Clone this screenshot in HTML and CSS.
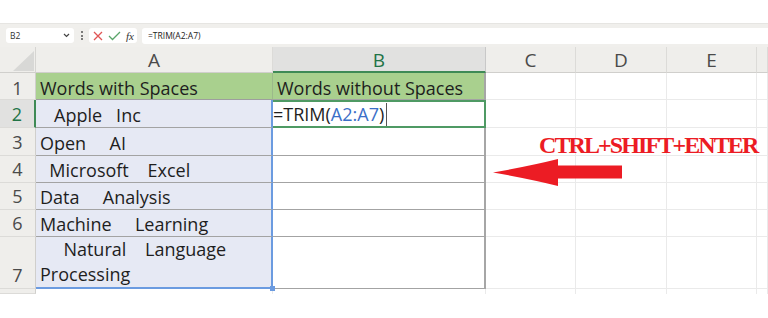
FILE: index.html
```html
<!DOCTYPE html>
<html lang="en">
<head>
    <meta charset="UTF-8">
    <meta name="viewport" content="width=device-width, initial-scale=1.0">
    <title>TRIM - Words without Spaces</title>
    <link rel="stylesheet" href="styles.css">
</head>
<body>
    <div class="top-gap"></div>

    <div class="formula-bar">
        <div class="name-box">
            <span>B2</span>
            <svg class="chevron" width="7" height="5" viewBox="0 0 7 5"><path d="M1 1 L3.5 3.5 L6 1" fill="none" stroke="#444" stroke-width="1.2"/></svg>
        </div>
        <div class="dots"><i></i><i></i><i></i></div>
        <div class="fx-box">
            <svg width="10" height="10" viewBox="0 0 10 10"><path d="M1 1 L9 9 M9 1 L1 9" stroke="#e05555" stroke-width="1.3"/></svg>
            <svg width="13" height="10" viewBox="0 0 13 10"><path d="M1 5 L4.5 8.5 L12 1" fill="none" stroke="#5aa56a" stroke-width="1.3"/></svg>
            <span class="fx">fx</span>
        </div>
        <div class="formula-input">=TRIM(A2:A7)</div>
    </div>

    <div class="sheet">
        <div class="grid">
            <!-- header row -->
            <div class="corner"></div>
            <div class="ch">A</div>
            <div class="ch active">B</div>
            <div class="ch">C</div>
            <div class="ch">D</div>
            <div class="ch">E</div>
            <div class="ch"></div>

            <!-- row 1 -->
            <div class="rh first">1</div>
            <div class="cell title">Words with Spaces</div>
            <div class="cell title col-b">Words without Spaces</div>
            <div class="cell"></div><div class="cell"></div><div class="cell"></div><div class="cell"></div>

            <!-- row 2 -->
            <div class="rh active">2</div>
            <div class="cell sel">   Apple   Inc</div>
            <div class="cell edit">=TRIM(<span class="ref">A2:A7</span>)<span class="caret"></span></div>
            <div class="cell"></div><div class="cell"></div><div class="cell"></div><div class="cell"></div>

            <!-- row 3 -->
            <div class="rh">3</div>
            <div class="cell sel">Open     AI</div>
            <div class="cell col-b"></div>
            <div class="cell"></div><div class="cell"></div><div class="cell"></div><div class="cell"></div>

            <!-- row 4 -->
            <div class="rh">4</div>
            <div class="cell sel">  Microsoft    Excel</div>
            <div class="cell col-b"></div>
            <div class="cell"></div><div class="cell"></div><div class="cell"></div><div class="cell"></div>

            <!-- row 5 -->
            <div class="rh">5</div>
            <div class="cell sel">Data     Analysis</div>
            <div class="cell col-b"></div>
            <div class="cell"></div><div class="cell"></div><div class="cell"></div><div class="cell"></div>

            <!-- row 6 -->
            <div class="rh">6</div>
            <div class="cell sel">Machine     Learning</div>
            <div class="cell col-b"></div>
            <div class="cell"></div><div class="cell"></div><div class="cell"></div><div class="cell"></div>

            <!-- row 7 -->
            <div class="rh">7</div>
            <div class="cell sel last">     Natural    Language Processing</div>
            <div class="cell col-b"></div>
            <div class="cell"></div><div class="cell"></div><div class="cell"></div><div class="cell"></div>

            <!-- row 8 (cut off) -->
            <div class="rh"></div>
            <div class="cell stub"></div><div class="cell stub"></div><div class="cell stub"></div>
            <div class="cell stub"></div><div class="cell stub"></div><div class="cell stub"></div>
        </div>

        <div class="note">CTRL+SHIFT+ENTER</div>
        <svg class="arrow" width="136" height="34" viewBox="0 0 136 34">
            <path d="M3 16.5 Q40 10 68 3 L68 9.5 L132 9.5 L132 22.5 L68 22.5 L68 30 Q40 23 3 16.5 Z" fill="#ec1c24"/>
        </svg>
    </div>
</body>
</html>
```

FILE: styles.css
```css
body {
    margin: 0;
    background: #fff;
    font-family: "Open Sans", Arial, sans-serif;
    color: #222;
    overflow: hidden;
}
.top-gap {
    height: 23px;
}

/* formula bar */
.formula-bar {
    height: 24px;
    background: #f0efec;
    display: flex;
    align-items: center;
    padding-left: 6px;
    box-sizing: border-box;
    border-top: 1px solid #e6e5e2;
}
.name-box {
    width: 68px;
    height: 15px;
    background: #fff;
    border-radius: 3px;
    display: flex;
    align-items: center;
    justify-content: space-between;
    padding: 0 4px;
    box-sizing: border-box;
    font-size: 8.5px;
    color: #333;
}
.dots {
    width: 15px;
    display: flex;
    flex-direction: column;
    align-items: center;
    gap: 1.5px;
}
.dots i {
    width: 2px;
    height: 2px;
    background: #555;
    border-radius: 50%;
}
.fx-box {
    width: 48px;
    height: 15px;
    background: #fff;
    border-radius: 3px;
    display: flex;
    align-items: center;
    justify-content: space-between;
    padding: 0 3px 0 4px;
    box-sizing: border-box;
}
.fx {
    font-family: "Liberation Serif", serif;
    font-style: italic;
    font-size: 11px;
    color: #333;
}
.formula-input {
    flex: 1;
    height: 16px;
    margin-left: 5px;
    background: #fff;
    border-radius: 3px 0 0 3px;
    font-size: 8.5px;
    line-height: 16px;
    padding-left: 6px;
    color: #222;
}

/* grid */
.sheet {
    position: relative;
    background: #fff;
}
.grid {
    display: grid;
    grid-template-columns: 36px 237px 213px 90px 91px 90px 11px;
    grid-template-rows: 26px 27px 28px 28px 27px 27px 27px 52px 5px;
}
.corner {
    background: #efeeeb;
    border-right: 1px solid #d6d5d2;
    border-bottom: 1px solid #d0cfcc;
    position: relative;
}
.corner::after {
    content: "";
    position: absolute;
    right: 1px;
    bottom: 1px;
    border-left: 21px solid transparent;
    border-bottom: 20px solid #d8d8d6;
}
.ch {
    background: #efeeeb;
    border-right: 1px solid #dcdbd8;
    border-bottom: 1px solid #d0cfcc;
    text-align: center;
    font-size: 19px;
    line-height: 26px;
    color: #4a4a4a;
}
.ch.active {
    background: #e1e1e0;
    color: #217346;
    border-bottom: 2px solid #3f8a56;
    border-right-color: #c8c8c8;
}
.rh {
    background: #efeeeb;
    border-right: 1px solid #d0cfcc;
    border-bottom: 1px solid #dcdbd8;
    display: flex;
    align-items: flex-end;
    justify-content: center;
    font-size: 18px;
    line-height: 25px;
    color: #4a4a4a;
}
.rh.first {
    line-height: 22px;
}
.rh.active {
    background: #e1e1e0;
    color: #217346;
    border-right: 2px solid #3f8a56;
}
.cell {
    box-sizing: border-box;
    border-right: 1px solid #eaeaea;
    border-bottom: 1px solid #eaeaea;
    font-size: 18px;
    line-height: 24px;
    padding: 0 3px 0 4px;
    white-space: pre-wrap;
    display: flex;
    align-items: flex-end;
    color: #1e1e1e;
}
.cell.stub {
    border-bottom: none;
}
.title {
    background: #a9d08e;
    border-right: 1px solid #9bb98a;
    border-bottom: 1px solid #9e9e9e;
    line-height: 21px;
}
.title.col-b {
    border-right: 2px solid #a6a6a6;
}
.sel {
    background: #e6e9f4;
    border-bottom: 1px solid #a3a3a3;
    border-right: 2px solid #6b9be0;
}
.sel.last {
    border-bottom: 2px solid #6b9be0;
    line-height: 25px;
    position: relative;
}
.sel.last::after {
    content: "";
    position: absolute;
    right: -4px;
    bottom: -4px;
    width: 5px;
    height: 5px;
    background: #6b9be0;
}
.col-b {
    border-right: 2px solid #a6a6a6;
    border-bottom: 1px solid #a3a3a3;
}
.edit {
    background: #fff;
    border: 2px solid #4f9a64;
    border-left: none;
    padding-left: 0;
    align-items: center;
}
.ref {
    color: #3b6fc8;
}
.caret {
    display: inline-block;
    width: 1px;
    height: 23px;
    background: #555;
    margin-left: 2px;
}

/* annotation over the sheet */
.note {
    position: absolute;
    left: 539px;
    top: 86px;
    font-family: "Liberation Serif", "Times New Roman", serif;
    font-weight: bold;
    font-size: 24px;
    line-height: 24px;
    letter-spacing: -1.9px;
    color: #ec1c24;
    white-space: nowrap;
}
.arrow {
    position: absolute;
    left: 490px;
    top: 109px;
}
```
